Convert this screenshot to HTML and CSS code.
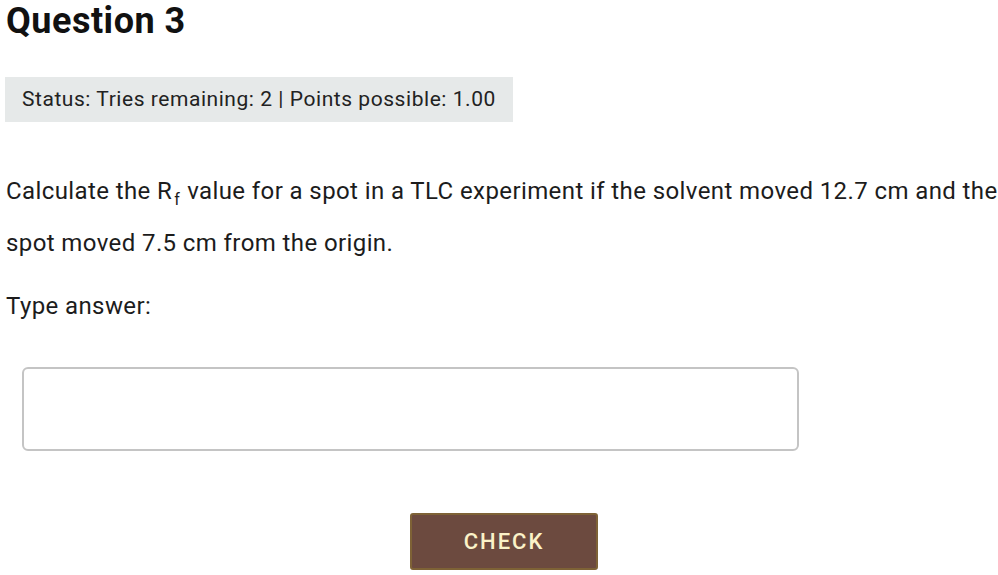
FILE: index.html
```html
<!DOCTYPE html>
<html>
<head>
<meta charset="utf-8">
<link rel="stylesheet" href="styles.css">
</head>
<body>
<main class="page">
  <h1 class="title">Question 3</h1>
  <div class="status">Status: Tries remaining: 2 | Points possible: 1.00</div>
  <p class="question">Calculate the R<sub>f</sub> value for a spot in a TLC experiment if the solvent moved 12.7 cm and the spot moved 7.5 cm from the origin.</p>
  <p class="prompt">Type answer:</p>
  <div class="answer-row">
    <input class="answer" type="text" aria-label="Answer">
  </div>
  <div class="actions">
    <button class="check" type="button">CHECK</button>
  </div>
</main>
</body>
</html>
```
FILE: styles.css
```css
html, body {
  margin: 0;
  padding: 0;
  background: #ffffff;
}
body {
  font-family: Roboto, "Liberation Sans", sans-serif;
  color: #1c1c1c;
  overflow: hidden;
}
.page {
  padding: 0 0 0 5px;
  display: flex;
  flex-direction: column;
}
.title {
  margin: 0;
  padding: 0 0 0 1px;
  font-size: 36px;
  line-height: 42px;
  font-weight: 700;
  letter-spacing: 0.5px;
  color: #111;
}
.status {
  align-self: flex-start;
  margin-top: 35px;
  height: 45px;
  line-height: 45px;
  padding: 0 17px;
  background: #e6e9e9;
  font-size: 21px;
  letter-spacing: 0.55px;
  color: #222;
}
.question {
  margin: 43px 0 0 1px;
  font-size: 24px;
  letter-spacing: 0.4px;
  line-height: 52px;
}
.question sub {
  display: inline-block;
  font-size: 16px;
  line-height: 16px;
  vertical-align: -6px;
  margin: 0 1px 0 2px;
  letter-spacing: 0;
}
.prompt {
  margin: 22px 0 0 1px;
  font-size: 24px;
  letter-spacing: 0.4px;
  line-height: 30px;
}
.answer-row {
  margin-top: 46px;
  padding-left: 17px;
}
.answer {
  box-sizing: border-box;
  width: 777px;
  height: 84px;
  border: 2px solid #c4c4c4;
  border-radius: 6px;
  background: #fff;
  font: inherit;
}
.actions {
  margin-top: 62px;
  padding-left: 405px;
}
.check {
  box-sizing: border-box;
  width: 188px;
  height: 57px;
  background: #6c4a3f;
  border: 2px solid #7e6236;
  border-radius: 3px;
  color: #fbf2c8;
  font-family: Roboto, "Liberation Sans", sans-serif;
  font-size: 22px;
  letter-spacing: 2px;
  font-weight: 500;
}
```
